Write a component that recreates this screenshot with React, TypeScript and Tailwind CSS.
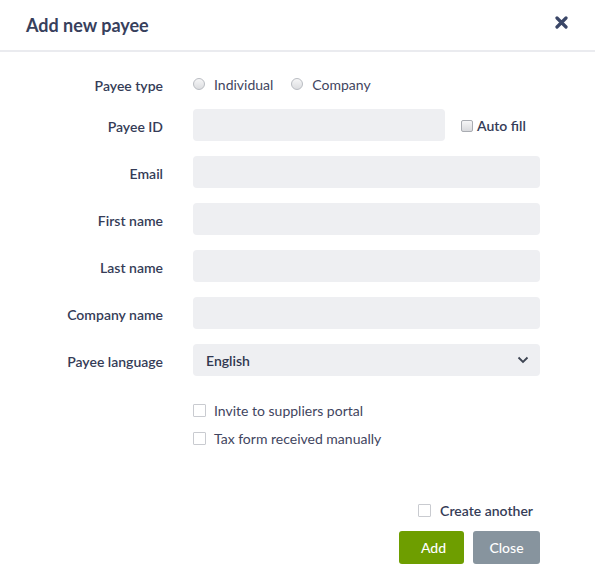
import React from "react";

const Label = ({ children }: { children: React.ReactNode }) => (
  <div className="w-[163px] shrink-0 pt-[2px] text-right text-[14px] font-semibold text-[#353c57]">{children}</div>
);

const Radio = ({ label }: { label: string }) => (
  <label className="flex items-center gap-[9px]">
    <span className="h-[12px] w-[12px] rounded-full border border-[#b9bcc2] bg-gradient-to-b from-[#f6f6f7] to-[#dcdde0]" />
    <span className="text-[14px] text-[#3f4560]">{label}</span>
  </label>
);

const Box = () => (
  <span className="h-[13px] w-[13px] shrink-0 rounded-[1px] border border-[#c9cbd0] bg-white" />
);

const Row = ({ label, children }: { label: string; children?: React.ReactNode }) => (
  <div className="mt-[15px] flex h-[32px] items-center gap-[30px]">
    <Label>{label}</Label>
    {children ?? <div className="h-[32px] w-[347px] rounded-[4px] bg-[#eeeff2]" />}
  </div>
);

export default function App() {
  return (
    <div className="h-[578px] w-[595px] bg-white font-['Lato',sans-serif]">
      <div className="flex h-[52px] items-center justify-between border-b-2 border-[#eaebef] pl-[26px] pr-[27px]">
        <h1 className="text-[18px] font-bold text-[#37405c]">Add new payee</h1>
        <svg width="13" height="13" viewBox="0 0 13 13" className="mb-[6px]">
          <path d="M2 2 L11 11 M11 2 L2 11" stroke="#3a4667" strokeWidth="3.2" strokeLinecap="round" />
        </svg>
      </div>

      <div className="pt-[16px]">
        <div className="flex h-[32px] items-center gap-[30px]">
          <Label>Payee type</Label>
          <div className="flex items-center gap-[18px]">
            <Radio label="Individual" />
            <Radio label="Company" />
          </div>
        </div>

        <div className="mt-[9px] flex h-[32px] items-center gap-[30px]">
          <Label>Payee ID</Label>
          <div className="h-[32px] w-[252px] rounded-[4px] bg-[#eeeff2]" />
          <label className="ml-[-14px] flex items-center gap-[4px] pt-[1px]">
            <span className="h-[12px] w-[12px] rounded-[2px] border border-[#a9acb2] bg-gradient-to-b from-[#f6f6f7] to-[#d9dadd]" />
            <span className="text-[14px] font-semibold text-[#353c57]">Auto fill</span>
          </label>
        </div>

        <Row label="Email" />
        <Row label="First name" />
        <Row label="Last name" />
        <Row label="Company name" />
        <Row label="Payee language">
          <div className="flex h-[32px] w-[347px] items-center justify-between rounded-[4px] bg-[#eeeff2] pl-[13px] pr-[11px]">
            <span className="text-[14px] font-semibold text-[#30374f]">English</span>
            <svg width="12" height="8" viewBox="0 0 12 8">
              <path d="M1.5 1.5 L6 6 L10.5 1.5" fill="none" stroke="#3d4452" strokeWidth="1.8" />
            </svg>
          </div>
        </Row>

        <div className="ml-[193px] mt-[24px] flex flex-col gap-[8px]">
          <label className="flex h-[20px] items-center gap-[8px]">
            <Box />
            <span className="text-[14px] text-[#3f4560]">Invite to suppliers portal</span>
          </label>
          <label className="flex h-[20px] items-center gap-[8px]">
            <Box />
            <span className="text-[14px] text-[#3f4560]">Tax form received manually</span>
          </label>
        </div>

        <div className="mt-[52px] flex justify-end pr-[62px]">
          <label className="flex h-[20px] items-center gap-[9px]">
            <Box />
            <span className="text-[14px] font-semibold text-[#353c57]">Create another</span>
          </label>
        </div>

        <div className="mt-[11px] flex justify-end gap-[9px] pr-[55px]">
          <button className="h-[33px] w-[65px] rounded-[3px] bg-[#6e9e00] pl-[4px] text-[14px] font-medium text-white">Add</button>
          <button className="h-[33px] w-[67px] rounded-[3px] bg-[#87949e] text-[14px] font-medium text-white">Close</button>
        </div>
      </div>
    </div>
  );
}
